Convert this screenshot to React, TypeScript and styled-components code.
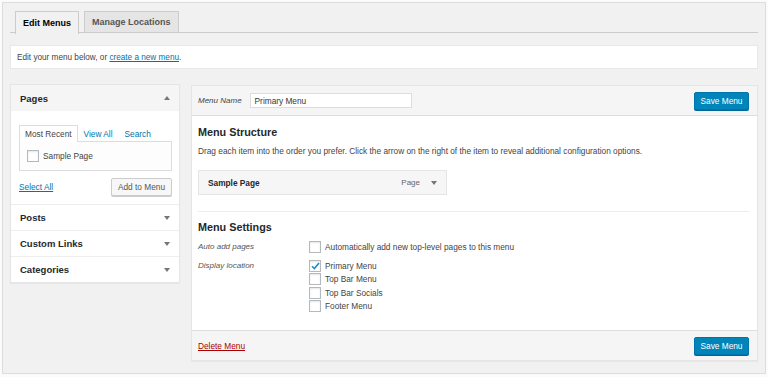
import React from "react";
import styled, { createGlobalStyle } from "styled-components";

const GlobalStyle = createGlobalStyle`
  html, body {
    margin: 0;
    padding: 0;
    background: #fbfbfb;
  }
  body {
    font-family: "Liberation Sans", Arial, sans-serif;
    color: #444;
  }
`;

const Frame = styled.div`
  box-sizing: border-box;
  margin: 2px;
  width: 764px;
  height: 372px;
  border: 1px solid #dcdcdc;
  background: #f1f1f1;
  padding: 7px 7px 0 7px;
`;

const TabBar = styled.div`
  display: flex;
  gap: 5px;
  padding-left: 5px;
  height: 22px;
  border-bottom: 1px solid #ccc;
`;

const Tab = styled.div<{ $active?: boolean }>`
  display: flex;
  align-items: center;
  padding: 0 7px;
  font-size: 9px;
  font-weight: bold;
  color: ${(p) => (p.$active ? "#000" : "#555")};
  background: ${(p) => (p.$active ? "#f1f1f1" : "#e5e5e5")};
  border: 1px solid #ccc;
  border-bottom: none;
  height: ${(p) => (p.$active ? "23px" : "21px")};
  margin-top: 1px;
  box-sizing: border-box;
  align-self: flex-start;
`;

const Notice = styled.div`
  margin-top: 12px;
  height: 24px;
  box-sizing: border-box;
  background: #fff;
  border: 1px solid #e8e8e8;
  display: flex;
  align-items: center;
  padding-left: 6px;
  font-size: 8.2px;
  color: #444;
`;

const Link = styled.a<{ $danger?: boolean }>`
  color: ${(p) => (p.$danger ? "#a00" : "#0073aa")};
  text-decoration: underline;
  cursor: pointer;
`;

const Columns = styled.div`
  display: flex;
  gap: 11px;
  margin-top: 15px;
  align-items: flex-start;
`;

const Sidebar = styled.div`
  width: 170px;
  box-sizing: border-box;
  background: #fff;
  border: 1px solid #e5e5e5;
  box-shadow: 0 1px 1px rgba(0, 0, 0, 0.04);
`;

const SectionHead = styled.div<{ $open?: boolean }>`
  display: flex;
  align-items: center;
  justify-content: space-between;
  height: 26px;
  padding: 0 9px 0 9px;
  font-size: 9.5px;
  font-weight: bold;
  color: #23282d;
  background: ${(p) => (p.$open ? "#f5f5f5" : "#fff")};
  border-top: ${(p) => (p.$open ? "none" : "1px solid #eee")};
  box-sizing: border-box;
`;

const SectionBody = styled.div`
  padding: 13px 7px 8px 8px;
  background: #fff;
`;

const InnerTabs = styled.div`
  display: flex;
  align-items: flex-end;
  height: 17px;
`;

const InnerTab = styled.div<{ $active?: boolean }>`
  font-size: 8.3px;
  padding: 0 5px;
  height: 17px;
  display: flex;
  align-items: center;
  box-sizing: border-box;
  color: ${(p) => (p.$active ? "#444" : "#0073aa")};
  background: ${(p) => (p.$active ? "#fff" : "transparent")};
  border: 1px solid ${(p) => (p.$active ? "#ddd" : "transparent")};
  border-bottom: none;
  margin-bottom: -1px;
  position: relative;
  z-index: 1;
`;

const TabPanel = styled.div`
  border: 1px solid #ddd;
  background: #fdfdfd;
  height: 30px;
  box-sizing: border-box;
  display: flex;
  align-items: center;
  padding-left: 7px;
`;

const CheckRow = styled.label`
  display: flex;
  align-items: center;
  gap: 4px;
  font-size: 8.3px;
  color: #444;
  height: 13.3px;
`;

const Box = styled.span`
  width: 10px;
  height: 10px;
  border: 1px solid #b4b9be;
  background: #fff;
  box-shadow: inset 0 1px 2px rgba(0, 0, 0, 0.1);
  display: inline-flex;
  align-items: center;
  justify-content: center;
  flex-shrink: 0;
`;

const SidebarActions = styled.div`
  display: flex;
  justify-content: space-between;
  align-items: center;
  margin-top: 7px;
  font-size: 8.3px;
`;

const Button = styled.button`
  font-family: inherit;
  font-size: 8.3px;
  height: 18px;
  padding: 0 6px;
  color: #555;
  background: #f7f7f7;
  border: 1px solid #ccc;
  border-radius: 2px;
  box-shadow: 0 1px 0 #ccc;
`;

const PrimaryButton = styled.button`
  font-family: inherit;
  font-size: 8.3px;
  height: 18px;
  width: 55px;
  color: #fff;
  background: #0085ba;
  border: 1px solid #0073aa;
  border-radius: 2px;
  box-shadow: 0 1px 0 #006799;
  padding: 0;
`;

const Editor = styled.div`
  flex: 1;
  margin-top: 1px;
  background: #fff;
  border: 1px solid #e5e5e5;
  box-shadow: 0 1px 1px rgba(0, 0, 0, 0.04);
`;

const EditorBar = styled.div<{ $bottom?: boolean }>`
  display: flex;
  align-items: center;
  gap: 8px;
  height: 30px;
  padding: 0 8px 0 6px;
  background: #f5f5f5;
  box-sizing: border-box;
  ${(p) => (p.$bottom ? "border-top: 1px solid #ddd;" : "border-bottom: 1px solid #ddd;")}
`;

const FieldLabel = styled.span`
  font-size: 8px;
  font-style: italic;
  color: #444;
`;

const NameInput = styled.div`
  width: 162px;
  height: 15px;
  box-sizing: border-box;
  border: 1px solid #ddd;
  background: #fff;
  font-size: 8.3px;
  color: #32373c;
  display: flex;
  align-items: center;
  padding-left: 4px;
`;

const Spacer = styled.div`
  flex: 1;
`;

const EditorBody = styled.div`
  padding: 9px 8px 0 6px;
  height: 214px;
  box-sizing: border-box;
`;

const Heading = styled.h3`
  margin: 0;
  font-size: 10.8px;
  font-weight: 600;
  color: #23282d;
  line-height: 14px;
`;

const Description = styled.p`
  margin: 6px 0 0 0;
  font-size: 8.3px;
  color: #444;
  line-height: 12px;
`;

const MenuItem = styled.div`
  margin-top: 13px;
  width: 249px;
  height: 25px;
  box-sizing: border-box;
  border: 1px solid #e5e5e5;
  background: #f6f6f6;
  display: flex;
  align-items: center;
  padding: 0 9px;
  font-size: 8.3px;
  font-weight: bold;
  color: #23282d;
`;

const ItemType = styled.span`
  margin-left: auto;
  font-weight: normal;
  color: #666;
  font-size: 8px;
  display: flex;
  align-items: center;
  gap: 11px;
`;

const Divider = styled.hr`
  border: none;
  border-top: 1px solid #eee;
  margin: 16px 0 8px 0;
`;

const SettingRow = styled.div`
  display: grid;
  grid-template-columns: 111px 1fr;
  margin-top: 6px;
`;

const SettingLabel = styled.div`
  font-size: 8px;
  font-style: italic;
  color: #555;
  line-height: 13.3px;
`;

const OptionList = styled.div`
  display: flex;
  flex-direction: column;
`;

const FooterLink = styled(Link)`
  font-size: 8.3px;
`;

const Caret = ({ up }: { up?: boolean }) => (
  <svg width="6" height="4" viewBox="0 0 6 4">
    <path d={up ? "M0 4 L3 0 L6 4 Z" : "M0 0 L6 0 L3 4 Z"} fill="#72777c" />
  </svg>
);

const Check = ({ checked, label }: { checked?: boolean; label: string }) => (
  <CheckRow>
    <Box>
      {checked && (
        <svg width="9" height="8" viewBox="0 0 9 8">
          <path d="M1 4.2 L3.4 6.6 L8 1" stroke="#1e8cbe" strokeWidth="1.6" fill="none" />
        </svg>
      )}
    </Box>
    {label}
  </CheckRow>
);

export default function App() {
  return (
    <>
      <GlobalStyle />
      <Frame>
        <TabBar>
          <Tab $active>Edit Menus</Tab>
          <Tab>Manage Locations</Tab>
        </TabBar>
        <Notice>
          Edit your menu below, or&nbsp;<Link>create a new menu</Link>.
        </Notice>
        <Columns>
          <Sidebar>
            <SectionHead $open>
              Pages <Caret up />
            </SectionHead>
            <SectionBody>
              <InnerTabs>
                <InnerTab $active>Most Recent</InnerTab>
                <InnerTab>View All</InnerTab>
                <InnerTab>Search</InnerTab>
              </InnerTabs>
              <TabPanel>
                <Check label="Sample Page" />
              </TabPanel>
              <SidebarActions>
                <Link>Select All</Link>
                <Button>Add to Menu</Button>
              </SidebarActions>
            </SectionBody>
            {["Posts", "Custom Links", "Categories"].map((t) => (
              <SectionHead key={t}>
                {t} <Caret />
              </SectionHead>
            ))}
          </Sidebar>
          <Editor>
            <EditorBar>
              <FieldLabel>Menu Name</FieldLabel>
              <NameInput>Primary Menu</NameInput>
              <Spacer />
              <PrimaryButton>Save Menu</PrimaryButton>
            </EditorBar>
            <EditorBody>
              <Heading>Menu Structure</Heading>
              <Description>
                Drag each item into the order you prefer. Click the arrow on the right of the item to reveal
                additional configuration options.
              </Description>
              <MenuItem>
                Sample Page
                <ItemType>
                  Page <Caret />
                </ItemType>
              </MenuItem>
              <Divider />
              <Heading>Menu Settings</Heading>
              <SettingRow>
                <SettingLabel>Auto add pages</SettingLabel>
                <OptionList>
                  <Check label="Automatically add new top-level pages to this menu" />
                </OptionList>
              </SettingRow>
              <SettingRow>
                <SettingLabel>Display location</SettingLabel>
                <OptionList>
                  <Check checked label="Primary Menu" />
                  <Check label="Top Bar Menu" />
                  <Check label="Top Bar Socials" />
                  <Check label="Footer Menu" />
                </OptionList>
              </SettingRow>
            </EditorBody>
            <EditorBar $bottom>
              <FooterLink $danger>Delete Menu</FooterLink>
              <Spacer />
              <PrimaryButton>Save Menu</PrimaryButton>
            </EditorBar>
          </Editor>
        </Columns>
      </Frame>
    </>
  );
}
